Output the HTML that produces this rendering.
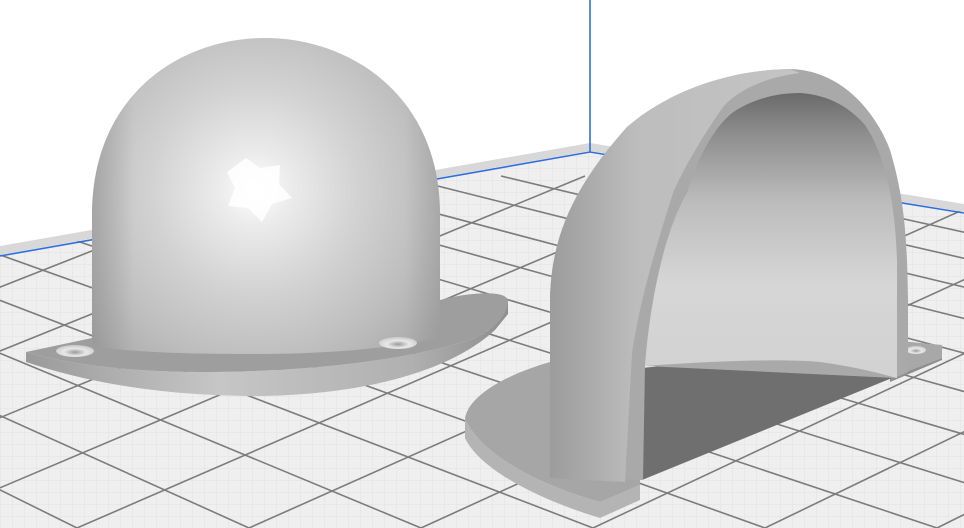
<!DOCTYPE html>
<html><head><meta charset="utf-8"><style>html,body{margin:0;padding:0;background:#fff}svg{display:block}</style></head>
<body>
<svg width="964" height="528" viewBox="0 0 964 528" xmlns="http://www.w3.org/2000/svg">
<defs>
<clipPath id="floor"><polygon points="0,255 590,151 964,212 964,528 0,528"/></clipPath>
<pattern id="fine" width="12" height="12" patternUnits="userSpaceOnUse"><rect width="12" height="12" fill="#efefef"/><path d="M0 0H12M0 0V12" stroke="#e2e2e2" stroke-width="1"/></pattern>
<radialGradient id="dome" cx="255" cy="190" r="230" gradientUnits="userSpaceOnUse">
<stop offset="0" stop-color="#ffffff"/><stop offset="0.15" stop-color="#ececec"/><stop offset="0.45" stop-color="#d2d2d2"/><stop offset="0.75" stop-color="#bdbdbd"/><stop offset="1" stop-color="#a8a8a8"/></radialGradient>
<linearGradient id="domeEdge" x1="92" x2="440" y1="0" y2="0" gradientUnits="userSpaceOnUse"><stop offset="0" stop-color="#8a8a8a" stop-opacity="0.5"/><stop offset="0.12" stop-color="#8a8a8a" stop-opacity="0"/><stop offset="0.9" stop-color="#8a8a8a" stop-opacity="0"/><stop offset="1" stop-color="#8a8a8a" stop-opacity="0.35"/></linearGradient>
<linearGradient id="flangeF" x1="0" x2="1"><stop offset="0" stop-color="#9a9a9a"/><stop offset="0.4" stop-color="#c6c6c6"/><stop offset="0.8" stop-color="#b0b0b0"/><stop offset="1" stop-color="#8e8e8e"/></linearGradient>
<linearGradient id="outerL" x1="0" x2="1" y1="0" y2="0"><stop offset="0" stop-color="#9c9c9c"/><stop offset="0.35" stop-color="#bdbdbd"/><stop offset="1" stop-color="#c4c4c4"/></linearGradient>
<linearGradient id="inner" x1="0" y1="93" x2="0" y2="366" gradientUnits="userSpaceOnUse"><stop offset="0" stop-color="#6a6a6a"/><stop offset="0.15" stop-color="#8e8e8e"/><stop offset="0.4" stop-color="#bcbcbc"/><stop offset="0.7" stop-color="#d6d6d6"/><stop offset="1" stop-color="#d2d2d2"/></linearGradient>
<radialGradient id="hole" cx="0.5" cy="0.6" r="0.6"><stop offset="0" stop-color="#9a9a9a"/><stop offset="0.5" stop-color="#e8e8e8"/><stop offset="1" stop-color="#c8c8c8"/></radialGradient>
</defs>
<rect width="964" height="528" fill="#ffffff"/>
<polygon points="0,246 590,143 964,204 964,212 590,151 0,255" fill="#d8d8d8"/>
<g clip-path="url(#floor)">
<rect width="964" height="528" fill="url(#fine)"/>
<g stroke="#7c7c7c" stroke-width="1.6">
<line x1="-267" y1="528" x2="-840" y2="176"/><line x1="-95" y1="528" x2="-737" y2="176"/><line x1="77" y1="528" x2="-634" y2="176"/><line x1="249" y1="528" x2="-531" y2="176"/><line x1="421" y1="528" x2="-427" y2="176"/><line x1="593" y1="528" x2="-324" y2="176"/><line x1="765" y1="528" x2="-221" y2="176"/><line x1="937" y1="528" x2="-118" y2="176"/><line x1="1109" y1="528" x2="-15" y2="176"/><line x1="1281" y1="528" x2="89" y2="176"/><line x1="1453" y1="528" x2="192" y2="176"/><line x1="1625" y1="528" x2="295" y2="176"/><line x1="1797" y1="528" x2="398" y2="176"/><line x1="1969" y1="528" x2="501" y2="176"/><line x1="2141" y1="528" x2="605" y2="176"/><line x1="2313" y1="528" x2="708" y2="176"/><line x1="2485" y1="528" x2="811" y2="176"/><line x1="2657" y1="528" x2="914" y2="176"/><line x1="2829" y1="528" x2="1017" y2="176"/>
<line x1="937" y1="528" x2="1645" y2="176"/><line x1="765" y1="528" x2="1493" y2="176"/><line x1="593" y1="528" x2="1342" y2="176"/><line x1="421" y1="528" x2="1191" y2="176"/><line x1="249" y1="528" x2="1039" y2="176"/><line x1="77" y1="528" x2="888" y2="176"/><line x1="-95" y1="528" x2="737" y2="176"/><line x1="-267" y1="528" x2="585" y2="176"/><line x1="-439" y1="528" x2="434" y2="176"/><line x1="-611" y1="528" x2="282" y2="176"/><line x1="-783" y1="528" x2="131" y2="176"/><line x1="-955" y1="528" x2="-20" y2="176"/><line x1="-1127" y1="528" x2="-172" y2="176"/><line x1="-1299" y1="528" x2="-323" y2="176"/><line x1="-1471" y1="528" x2="-475" y2="176"/><line x1="-1643" y1="528" x2="-626" y2="176"/>
</g>
</g>
<polyline points="0,256 590,152 964,213" fill="none" stroke="#2f6fdc" stroke-width="1.6"/>
<line x1="590" y1="0" x2="590" y2="152" stroke="#2f6fdc" stroke-width="1.6"/>

<!-- Left dome flange -->
<path d="M26,352 L26,362 C80,380 150,395 250,396 C360,396 450,372 495,330 L508,314 L508,300 C505,320 490,332 470,340 C400,362 300,372 200,372 C120,372 60,362 26,352Z" fill="url(#flangeF)"/>
<path d="M26,352 L92,338 L440,300 C470,292 505,290 508,300 C508,318 490,332 470,340 C400,362 300,372 200,372 C120,372 60,362 26,352Z" fill="#9e9e9e"/>
<!-- dome -->
<path d="M92,346 L92,215 C92,95 180,38 265,38 C350,38 440,95 440,215 L440,338 C380,350 320,354 250,354 C180,354 130,352 92,346Z" fill="url(#dome)"/>
<path d="M92,346 L92,215 C92,95 180,38 265,38 C350,38 440,95 440,215 L440,338 C380,350 320,354 250,354 C180,354 130,352 92,346Z" fill="url(#domeEdge)"/>
<polygon points="246,158 260,168 280,165 279,184 292,198 272,204 262,222 248,208 228,206 235,188 227,172" fill="#ffffff" opacity="0.85"/>
<ellipse cx="75" cy="351" rx="19" ry="6" fill="url(#hole)"/>
<ellipse cx="398" cy="343" rx="19" ry="6" fill="url(#hole)"/>

<!-- right foot -->
<path d="M890,340 L942,345 L942,358 L890,378Z" fill="#a8a8a8"/>
<path d="M942,345 L942,360 L890,382 L890,378 L942,358Z" fill="#8e8e8e"/>
<ellipse cx="916" cy="350" rx="10" ry="4" fill="url(#hole)"/>
<!-- left base -->
<path d="M465,418 L465,438 C480,470 540,500 600,518 L640,500 L640,485 L600,502 C540,485 480,455 465,418Z" fill="#b4b4b4"/>
<path d="M465,418 C470,392 515,372 550,362 L640,360 L640,485 L600,502 C540,485 480,455 465,418Z" fill="#a6a6a6"/>
<ellipse cx="572" cy="466" rx="17" ry="7" fill="url(#hole)"/>
<!-- floor shadow -->
<path d="M642,368 C700,362 780,358 820,362 C850,366 875,372 892,378 L642,480Z" fill="#6f6f6f"/>
<!-- shell silhouette (rim colour) -->
<path d="M550,478 L550,300 C551,230 580,180 627,127 C670,90 730,70 790,69 C840,70 875,110 890,150 C905,200 907,240 908,300 L908,372 L895,378 L645,366 L643,480Z" fill="#a9a9a9"/>
<!-- outer left surface -->
<path d="M550,478 L550,300 C551,230 580,180 627,127 C670,90 730,70 790,69 L800,73 C760,78 735,93 723,107 C700,140 683,170 673,193 C655,250 640,300 632,353 L625,482Z" fill="url(#outerL)"/>
<!-- inner surface -->
<path d="M645,366 C650,300 665,230 687,193 C700,150 720,118 740,108 C760,97 780,93 800,93 C830,95 850,108 865,125 C885,155 895,200 897,260 L897,378 C875,372 850,366 820,362 C780,358 700,362 645,366Z" fill="url(#inner)"/>
</svg>
</body></html>
